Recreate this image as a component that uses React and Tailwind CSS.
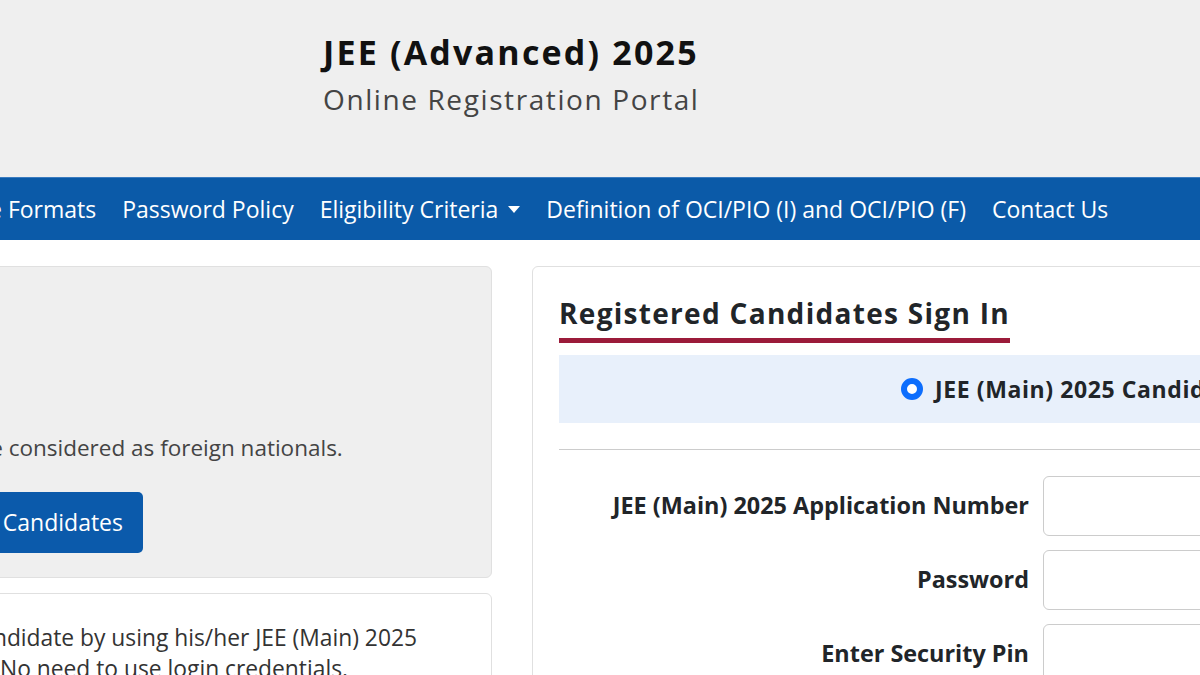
export default function App() {
  const navItems = ['Image Formats', 'Password Policy', 'Eligibility Criteria', 'Definition of OCI/PIO (I) and OCI/PIO (F)', 'Contact Us'];

  return (
    <div className="w-[1200px] h-[675px] overflow-hidden bg-white font-['Open_Sans',sans-serif] text-[#212529]">
      <header className="h-[177px] bg-[#efefef] pl-[323px] pt-[29px]">
        <h1 className="text-[34px] font-bold leading-[46px] tracking-[2.2px] text-[#111]">JEE (Advanced) 2025</h1>
        <p className="mt-[6px] text-[28px] font-medium leading-[36px] tracking-[1.6px] text-[#444]">Online Registration Portal</p>
      </header>

      <nav className="h-[63px] bg-[#0b5aa8] border-t border-[#3b7cc0] flex items-center gap-[26px] whitespace-nowrap text-[23px] text-white ml-[-64px]">
        {navItems.map((item) => (
          <span key={item} className="flex items-center gap-[10px]">
            {item}
            {item === 'Eligibility Criteria' && (
              <svg width="12" height="7" viewBox="0 0 12 7"><path d="M0 0h12L6 7z" fill="white" /></svg>
            )}
          </span>
        ))}
      </nav>

      <div className="flex gap-[40px] ml-[-257px] pt-[26px]">
        <div className="w-[749px] shrink-0 flex flex-col gap-[15px]">
          <div className="h-[312px] bg-[#efefef] border border-[#e0e0e0] rounded-[6px] pl-[20px] pt-[164px]">
            <p className="w-[578px] text-right whitespace-nowrap text-[22.5px] text-[#444]">Foreign candidates are considered as foreign nationals.</p>
            <div className="w-[379px] flex justify-end mt-[27px]">
              <button className="h-[61px] px-[20px] rounded-[5px] bg-[#0b5aab] text-white text-[23px] whitespace-nowrap">Register as Foreign Candidates</button>
            </div>
          </div>
          <div className="h-[200px] bg-white border border-[#e0e0e0] rounded-[6px] pt-[28px] pl-[20px] text-[22.8px] leading-[31px] text-[#333] whitespace-nowrap">
            <p className="w-[653px] text-right">Login as a candidate by using his/her JEE (Main) 2025</p>
            <p className="w-[584px] text-right">Application Number. No need to use login credentials.</p>
          </div>
        </div>

        <div className="w-[800px] shrink-0 bg-white border border-[#e0e0e0] rounded-[6px] px-[26px] pt-[26px]">
          <h2 className="inline-block text-[28px] font-bold tracking-[1.3px] leading-[40px] text-[#212529] border-b-[5px] border-[#9b1b3a] pb-[5px]">Registered Candidates Sign In</h2>
          <div className="mt-[12px] h-[68px] bg-[#e8f0fb] flex items-center pl-[342px] gap-[12px]">
            <span className="w-[22px] h-[22px] rounded-full border-[6px] border-[#0d6efd] bg-white" />
            <span className="whitespace-nowrap text-[23px] font-bold tracking-[0.6px]">JEE (Main) 2025 Candidates</span>
          </div>
          <hr className="mt-[26px] border-t border-[#ccc]" />
          <div className="mt-[26px] flex flex-col gap-[14px]">
            {['JEE (Main) 2025 Application Number', 'Password', 'Enter Security Pin'].map((label) => (
              <div key={label} className="flex items-center gap-[14px]">
                <label className="w-[470px] shrink-0 text-right text-[23.4px] font-bold whitespace-nowrap">{label}</label>
                <div className="w-[300px] shrink-0 h-[60px] border border-[#ccc] rounded-[6px] bg-white" />
              </div>
            ))}
          </div>
        </div>
      </div>
    </div>
  );
}
